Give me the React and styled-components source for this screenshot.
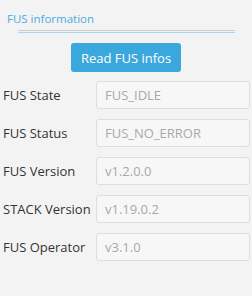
import React from "react";
import styled, { createGlobalStyle } from "styled-components";

const Global = createGlobalStyle`
  html, body { margin: 0; padding: 0; background: #f3f3f3; }
  body { font-family: "Open Sans", "Noto Sans", sans-serif; }
`;

const Panel = styled.div`
  width: 252px;
  height: 296px;
  box-sizing: border-box;
  background: #f3f3f3;
  display: flex;
  flex-direction: column;
  padding: 12px 2px 0 3px;
`;

const Header = styled.div`
  display: flex;
  flex-direction: column;
`;

const Title = styled.div`
  font-size: 11.5px;
  line-height: 14px;
  color: #4aabe3;
  padding-left: 4px;
`;

const Rule = styled.div`
  margin: 4px 15px 0 15px;
  height: 1px;
  border-top: 1px solid #c6ccd0;
  border-bottom: 1px solid #a6d8ee;
`;

const ButtonRow = styled.div`
  display: flex;
  justify-content: center;
  margin-top: 10px;
`;

const Button = styled.button`
  width: 110px;
  height: 29px;
  border: none;
  border-radius: 3px;
  background: #3aa8dc;
  color: #ffffff;
  font-family: inherit;
  font-size: 13px;
  padding: 0;
  margin-left: -1px;
`;

const Fields = styled.div`
  display: flex;
  flex-direction: column;
  gap: 10px;
  margin-top: 9px;
`;

const Row = styled.div`
  display: grid;
  grid-template-columns: 93px 1fr;
  align-items: center;
`;

const Label = styled.div`
  font-size: 13px;
  color: #333333;
`;

const Value = styled.div`
  height: 26px;
  box-sizing: content-box;
  border: 1px solid #dedede;
  border-radius: 3px;
  background: #f7f7f7;
  color: #a8a8a8;
  font-size: 13px;
  line-height: 26px;
  padding-left: 8px;
`;

const rows = [
  ["FUS State", "FUS_IDLE"],
  ["FUS Status", "FUS_NO_ERROR"],
  ["FUS Version", "v1.2.0.0"],
  ["STACK Version", "v1.19.0.2"],
  ["FUS Operator", "v3.1.0"],
];

export default function App() {
  return (
    <>
      <Global />
      <Panel>
        <Header>
          <Title>FUS information</Title>
          <Rule />
        </Header>
        <ButtonRow>
          <Button>Read FUS infos</Button>
        </ButtonRow>
        <Fields>
          {rows.map(([l, v]) => (
            <Row key={l}>
              <Label>{l}</Label>
              <Value>{v}</Value>
            </Row>
          ))}
        </Fields>
      </Panel>
    </>
  );
}
